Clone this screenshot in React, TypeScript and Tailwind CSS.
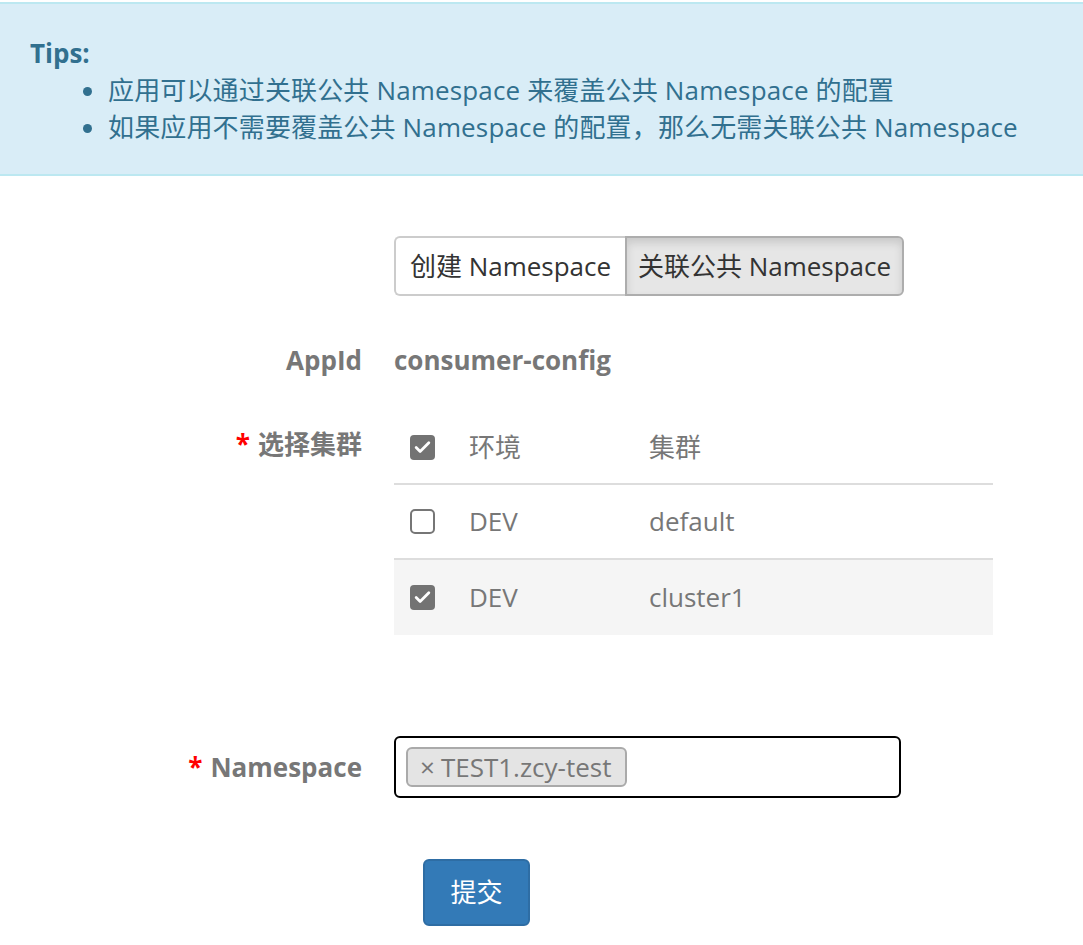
import { Check } from 'lucide-react';

const font = "font-['Open_Sans','Noto_Sans_CJK_SC',sans-serif]";

function Box({ checked }: { checked: boolean }) {
  return checked ? (
    <span className="flex h-[25px] w-[25px] items-center justify-center rounded-[4px] bg-[#737373]">
      <Check className="h-[19px] w-[19px] text-white" strokeWidth={3.5} />
    </span>
  ) : (
    <span className="block h-[25px] w-[25px] rounded-[5px] border-2 border-[#767676] bg-white" />
  );
}

function Label({ children, required }: { children: React.ReactNode; required?: boolean }) {
  return (
    <div className="w-[362px] shrink-0 text-right text-[26px] font-bold leading-[37px] text-[#777]">
      {required && <span className="mr-[8px] text-[#ff0000]">*</span>}
      {children}
    </div>
  );
}

const rows = [
  { env: 'DEV', cluster: 'default', checked: false },
  { env: 'DEV', cluster: 'cluster1', checked: true },
];

export default function App() {
  return (
    <div className={`${font} min-h-[945px] w-[1083px] overflow-hidden bg-white pt-[2px]`}>
      {/* Tips alert */}
      <div className="border-y-2 border-[#bce8f1] bg-[#d9edf7] pb-[28px] pt-[31px] text-[#31708f]">
        <div className="pl-[30px] text-[26px] font-bold leading-[37px]">Tips:</div>
        <ul className="list-disc pl-[108px] text-[26px] leading-[37px] tracking-[0.15px] marker:text-[#31708f]">
          <li>应用可以通过关联公共 Namespace 来覆盖公共 Namespace 的配置</li>
          <li>如果应用不需要覆盖公共 Namespace 的配置，那么无需关联公共 Namespace</li>
        </ul>
      </div>

      {/* Toggle */}
      <div className="mt-[60px] flex pl-[394px] text-[26px] text-[#333]">
        <button className="h-[60px] w-[231px] rounded-l-[6px] border-2 border-r-0 border-[#ccc] bg-white">
          创建 Namespace
        </button>
        <button className="h-[60px] w-[279px] rounded-r-[6px] border-2 border-[#adadad] bg-[#e6e6e6] shadow-[inset_0_5px_9px_rgba(0,0,0,0.125)]">
          关联公共 Namespace
        </button>
      </div>

      {/* AppId */}
      <div className="mt-[46px] flex">
        <Label>AppId</Label>
        <div className="ml-[32px] text-[26px] font-bold leading-[37px] text-[#777]">consumer-config</div>
      </div>

      {/* Clusters */}
      <div className="mt-[32px] flex">
        <div className="pt-[15px]">
          <Label required>选择集群</Label>
        </div>
        <div className="ml-[32px] w-[599px] text-[26px] text-[#777]">
          <div className="flex h-[74px] items-center border-b-2 border-[#ddd]">
            <span className="w-[75px] pl-[16px]">
              <Box checked />
            </span>
            <span className="w-[180px]">环境</span>
            <span>集群</span>
          </div>
          {rows.map((r, i) => (
            <div
              key={r.cluster}
              className={`flex h-[75px] items-center ${i === 0 ? 'border-b-2 border-[#ddd]' : 'bg-[#f5f5f5]'}`}
            >
              <span className="w-[75px] pl-[16px]">
                <Box checked={r.checked} />
              </span>
              <span className="w-[180px]">{r.env}</span>
              <span>{r.cluster}</span>
            </div>
          ))}
        </div>
      </div>

      {/* Namespace */}
      <div className="mt-[101px] flex items-center">
        <Label required>Namespace</Label>
        <div className="ml-[32px] flex h-[62px] w-[507px] items-center rounded-[6px] border-2 border-black px-[10px]">
          <span className="flex h-[40px] items-center rounded-[6px] border-2 border-[#aaa] bg-[#e4e4e4] pl-[12px] pr-[14px] text-[26px] text-[#777]">
            <span className="mr-[6px]">×</span>TEST1.zcy-test
          </span>
        </div>
      </div>

      {/* Submit */}
      <div className="mt-[61px] pl-[423px]">
        <button className="h-[67px] w-[107px] rounded-[6px] border-2 border-[#2e6da4] bg-[#337ab7] text-[26px] text-white">
          提交
        </button>
      </div>
    </div>
  );
}
